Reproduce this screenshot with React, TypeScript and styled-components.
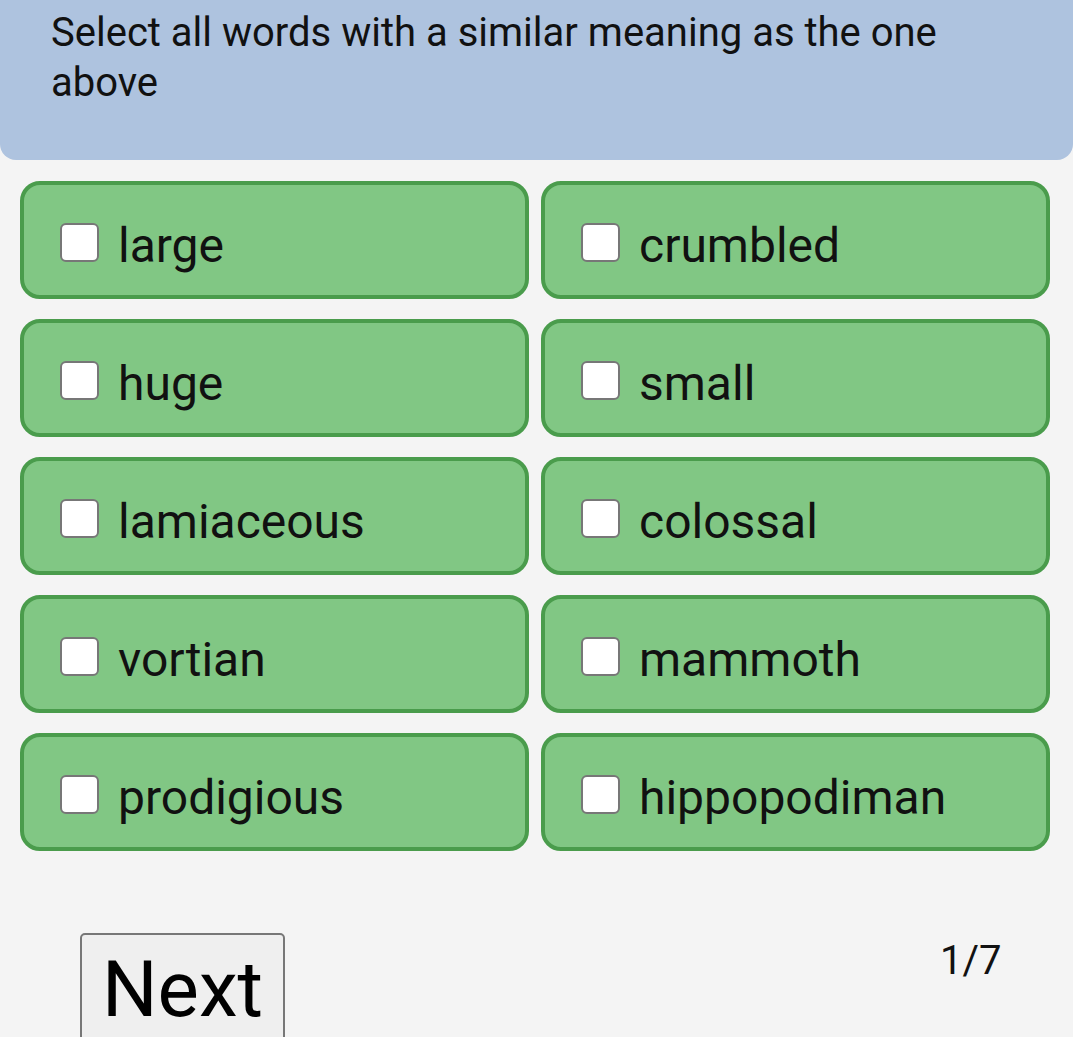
import { useState } from "react";
import styled, { createGlobalStyle } from "styled-components";

const GlobalStyle = createGlobalStyle`
    html, body {
        margin: 0;
        padding: 0;
        background: #f4f4f4;
        font-family: Roboto, "Liberation Sans", sans-serif;
        color: #111;
    }
`;

const Page = styled.div`
    width: 1073px;
    height: 1037px;
    overflow: hidden;
    background: #f4f4f4;
`;

const Prompt = styled.div`
    box-sizing: border-box;
    height: 160px;
    padding: 8px 110px 0 51px;
    background: #aec3df;
    border-radius: 0 0 16px 16px;
    font-size: 40px;
    line-height: 50px;
`;

const Options = styled.div`
    display: grid;
    grid-template-columns: 509px 509px;
    column-gap: 12px;
    row-gap: 20px;
    padding: 21px 0 0 20px;
`;

const Option = styled.label<{ $checked: boolean }>`
    box-sizing: border-box;
    height: 118px;
    display: flex;
    align-items: center;
    gap: 19px;
    padding: 0 0 0 36px;
    background: ${(p) => (p.$checked ? "#a5d6a7" : "#81c784")};
    border: 4px solid #4a9c4c;
    border-radius: 20px;
    font-size: 48px;
    cursor: pointer;
`;

const Box = styled.span<{ $checked: boolean }>`
    box-sizing: border-box;
    width: 39px;
    height: 39px;
    flex: none;
    margin-top: 4px;
    background: #fff;
    border: 2px solid #777;
    border-radius: 6px;
    display: flex;
    align-items: center;
    justify-content: center;
    color: #2e7d32;
    font-size: 28px;
`;

const Word = styled.span`
    line-height: 1;
    margin-top: 12px;
`;

const Footer = styled.div`
    display: flex;
    align-items: flex-start;
    padding: 82px 0 0 80px;
`;

const NextButton = styled.button`
    box-sizing: border-box;
    width: 205px;
    height: 120px;
    padding: 0 0 8px;
    background: #efefef;
    border: 2px solid #777;
    border-radius: 5px;
    font-family: Roboto, "Liberation Sans", sans-serif;
    font-size: 78px;
    color: #000;
`;

const Counter = styled.div`
    margin: 4px 0 0 655px;
    font-size: 40px;
    line-height: 48px;
`;

const words = [
    "large",
    "crumbled",
    "huge",
    "small",
    "lamiaceous",
    "colossal",
    "vortian",
    "mammoth",
    "prodigious",
    "hippopodiman",
];

const App = () => {
    const [picked, setPicked] = useState<string[]>([]);

    const toggle = (w: string) =>
        setPicked((cur) => (cur.includes(w) ? cur.filter((x) => x !== w) : [...cur, w]));

    return (
        <Page>
            <GlobalStyle />
            <Prompt>Select all words with a similar meaning as the one above</Prompt>
            <Options>
                {words.map((w) => {
                    const on = picked.includes(w);
                    return (
                        <Option key={w} $checked={on} onClick={() => toggle(w)}>
                            <Box $checked={on}>{on ? "✓" : ""}</Box>
                            <Word>{w}</Word>
                        </Option>
                    );
                })}
            </Options>
            <Footer>
                <NextButton>Next</NextButton>
                <Counter>1/7</Counter>
            </Footer>
        </Page>
    );
};

export default App;
